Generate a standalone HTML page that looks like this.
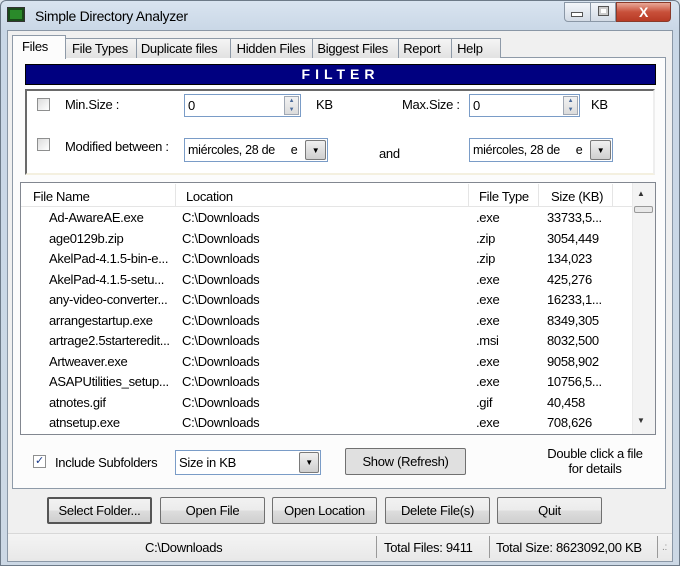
<!DOCTYPE html>
<html><head><style>
*{box-sizing:border-box;margin:0;padding:0}
body{width:680px;height:566px;overflow:hidden;background:#dfe6ee;font-family:"Liberation Sans",sans-serif;font-size:13px;color:#000;position:relative;letter-spacing:-0.3px}
.a{position:absolute}
.btn{position:absolute;border:1px solid #707070;background:linear-gradient(#f2f2f2,#ebebeb 50%,#dddddd 51%,#cfcfcf);border-radius:2px;text-align:center;font-size:13px}
.inp{position:absolute;background:#fff;border:1px solid #7a9cc7}
.cb{position:absolute;width:13px;height:13px;border:1px solid #8e8f8f;background:linear-gradient(135deg,#dcdcdc,#fff)}
.row{position:absolute;left:22px;width:590px;height:20px;line-height:20px}
.row span{position:absolute;white-space:nowrap}
.spin{position:absolute;width:15px;height:19px;border:1px solid #a0a8b4;background:linear-gradient(#f2f2f2,#dcdcdc);font-size:6px;line-height:9px;text-align:center;color:#4a6a9a}
</style></head><body>
<div class="a" style="left:0;top:0;width:680px;height:566px;border:1px solid #6d7a88;border-radius:6px 6px 0 0;background:linear-gradient(#d9e4f0,#c9d7e6 30px,#ccd8e5)"></div>
<div class="a" style="left:7px;top:7px;width:18px;height:15px;background:#1a4a1a;border:1px solid #333"><div style="margin:2px;height:9px;background:#2a8a2a"></div></div>
<div class="a" style="left:35px;top:8px;font-size:14px">Simple Directory Analyzer</div>
<div class="a" style="left:564px;top:2px;width:52px;height:20px;border:1px solid #8a97a6;border-radius:0 0 0 4px;background:linear-gradient(#f3f6fa,#d3dbe5)"></div>
<div class="a" style="left:590px;top:2px;width:1px;height:20px;background:#8a97a6"></div>
<div class="a" style="left:571px;top:12px;width:12px;height:5px;border:1px solid #555;background:#fff"></div>
<div class="a" style="left:598px;top:6px;width:11px;height:10px;border:1px solid #555;background:#fff;box-shadow:inset 0 0 0 2px #ccc"></div>
<div class="a" style="left:616px;top:2px;width:55px;height:20px;border:1px solid #8a3a2a;border-radius:0 0 4px 0;background:linear-gradient(#e8a898,#c8503a 50%,#b83a25);color:#fff;font-weight:bold;text-align:center;font-size:14px;line-height:18px">X</div>
<div class="a" style="left:7px;top:30px;width:666px;height:532px;background:#f0f0f0;border:1px solid #8a97a6"></div>
<div class="a" style="left:12px;top:57px;width:654px;height:432px;background:#fcfcfc;border:1px solid #8e9aa8"></div>
<div class="a" style="left:65px;top:38px;width:436px;height:20px;display:flex;font-size:13px">
<div style="border:1px solid #8e9aa8;border-bottom:none;background:linear-gradient(#f5f5f5,#e2e2e2);padding:2px 6px 0;width:72px">File Types</div>
<div style="border:1px solid #8e9aa8;border-bottom:none;border-left:none;background:linear-gradient(#f5f5f5,#e2e2e2);padding:2px 4px 0;width:94px">Duplicate files</div>
<div style="border:1px solid #8e9aa8;border-bottom:none;border-left:none;background:linear-gradient(#f5f5f5,#e2e2e2);padding:2px 6px 0;width:83px">Hidden Files</div>
<div style="border:1px solid #8e9aa8;border-bottom:none;border-left:none;background:linear-gradient(#f5f5f5,#e2e2e2);padding:2px 4px 0;width:86px">Biggest Files</div>
<div style="border:1px solid #8e9aa8;border-bottom:none;border-left:none;background:linear-gradient(#f5f5f5,#e2e2e2);padding:2px 4px 0;width:53px">Report</div>
<div style="border:1px solid #8e9aa8;border-bottom:none;border-left:none;background:linear-gradient(#f5f5f5,#e2e2e2);padding:2px 5px 0;width:49px">Help</div>
</div>
<div class="a" style="left:12px;top:35px;width:54px;height:24px;background:#fcfcfc;border:1px solid #8e9aa8;border-bottom:none;padding:3px 0 0 9px">Files</div>
<div class="a" style="left:25px;top:64px;width:631px;height:21px;background:#000080;border:1px solid #000;color:#fff;font-weight:bold;text-align:center;letter-spacing:5px;font-size:14px;line-height:19px">FILTER</div>
<div class="a" style="left:25px;top:89px;width:630px;height:86px;border:2px solid #6a6a6a;border-right-color:#eee;border-bottom-color:#f4f0e0;background:#fff"></div>
<div class="cb" style="left:37px;top:98px"></div>
<div class="a" style="left:65px;top:97px">Min.Size :</div>
<div class="inp" style="left:184px;top:94px;width:117px;height:23px;padding:3px 3px">0</div>
<div class="spin" style="left:284px;top:96px">▲<br>▼</div>
<div class="a" style="left:316px;top:97px">KB</div>
<div class="a" style="left:402px;top:97px">Max.Size :</div>
<div class="inp" style="left:469px;top:94px;width:111px;height:23px;padding:3px 3px">0</div>
<div class="spin" style="left:563px;top:96px">▲<br>▼</div>
<div class="a" style="left:591px;top:97px">KB</div>
<div class="cb" style="left:37px;top:138px"></div>
<div class="a" style="left:65px;top:139px">Modified between :</div>
<div class="inp" style="left:184px;top:138px;width:144px;height:24px;padding:4px 3px;font-size:12.5px">miércoles, 28 de &nbsp;&nbsp;&nbsp;&nbsp;e</div>
<div class="a" style="left:305px;top:140px;width:21px;height:20px;border:1px solid #7a7a7a;border-radius:2px;background:linear-gradient(#f0f0f0,#cfcfcf);font-size:8px;text-align:center;line-height:19px">▼</div>
<div class="a" style="left:379px;top:146px">and</div>
<div class="inp" style="left:469px;top:138px;width:144px;height:24px;padding:4px 3px;font-size:12.5px">miércoles, 28 de &nbsp;&nbsp;&nbsp;&nbsp;e</div>
<div class="a" style="left:590px;top:140px;width:21px;height:20px;border:1px solid #7a7a7a;border-radius:2px;background:linear-gradient(#f0f0f0,#cfcfcf);font-size:8px;text-align:center;line-height:19px">▼</div>
<div class="a" style="left:20px;top:182px;width:636px;height:253px;border:1px solid #828790;background:#fff"></div>
<div class="a" style="left:21px;top:183px;width:611px;height:24px;background:#fff;border-bottom:1px solid #e5e5e5"></div>
<div class="a" style="left:175px;top:184px;width:1px;height:22px;background:#e5e5e5"></div>
<div class="a" style="left:468px;top:184px;width:1px;height:22px;background:#e5e5e5"></div>
<div class="a" style="left:538px;top:184px;width:1px;height:22px;background:#e5e5e5"></div>
<div class="a" style="left:612px;top:184px;width:1px;height:22px;background:#e5e5e5"></div>
<div class="a" style="left:33px;top:189px">File Name</div>
<div class="a" style="left:186px;top:189px">Location</div>
<div class="a" style="left:479px;top:189px">File Type</div>
<div class="a" style="left:551px;top:189px">Size (KB)</div>
<div class="a" style="left:632px;top:183px;width:23px;height:251px;background:#f3f3f3;border-left:1px solid #eaeaea"></div>
<div class="a" style="left:637px;top:189px;font-size:8px;color:#333">▲</div>
<div class="a" style="left:634px;top:206px;width:19px;height:7px;border:1px solid #999;border-radius:2px;background:#e8e8e8"></div>
<div class="a" style="left:637px;top:416px;font-size:8px;color:#333">▼</div>
<div class="row" style="top:208px"><span style="left:27px">Ad-AwareAE.exe</span><span style="left:160px">C:\Downloads</span><span style="left:454px">.exe</span><span style="left:525px">33733,5...</span></div>
<div class="row" style="top:228.5px"><span style="left:27px">age0129b.zip</span><span style="left:160px">C:\Downloads</span><span style="left:454px">.zip</span><span style="left:525px">3054,449</span></div>
<div class="row" style="top:249px"><span style="left:27px">AkelPad-4.1.5-bin-e...</span><span style="left:160px">C:\Downloads</span><span style="left:454px">.zip</span><span style="left:525px">134,023</span></div>
<div class="row" style="top:269.5px"><span style="left:27px">AkelPad-4.1.5-setu...</span><span style="left:160px">C:\Downloads</span><span style="left:454px">.exe</span><span style="left:525px">425,276</span></div>
<div class="row" style="top:290px"><span style="left:27px">any-video-converter...</span><span style="left:160px">C:\Downloads</span><span style="left:454px">.exe</span><span style="left:525px">16233,1...</span></div>
<div class="row" style="top:310.5px"><span style="left:27px">arrangestartup.exe</span><span style="left:160px">C:\Downloads</span><span style="left:454px">.exe</span><span style="left:525px">8349,305</span></div>
<div class="row" style="top:331px"><span style="left:27px">artrage2.5starteredit...</span><span style="left:160px">C:\Downloads</span><span style="left:454px">.msi</span><span style="left:525px">8032,500</span></div>
<div class="row" style="top:351.5px"><span style="left:27px">Artweaver.exe</span><span style="left:160px">C:\Downloads</span><span style="left:454px">.exe</span><span style="left:525px">9058,902</span></div>
<div class="row" style="top:372px"><span style="left:27px">ASAPUtilities_setup...</span><span style="left:160px">C:\Downloads</span><span style="left:454px">.exe</span><span style="left:525px">10756,5...</span></div>
<div class="row" style="top:392.5px"><span style="left:27px">atnotes.gif</span><span style="left:160px">C:\Downloads</span><span style="left:454px">.gif</span><span style="left:525px">40,458</span></div>
<div class="row" style="top:413px;height:20px;overflow:hidden"><span style="left:27px">atnsetup.exe</span><span style="left:160px">C:\Downloads</span><span style="left:454px">.exe</span><span style="left:525px">708,626</span></div>
<div class="cb" style="left:33px;top:455px;background:#fff;color:#1a3a8a;font-size:11px;line-height:11px;text-align:center">✓</div>
<div class="a" style="left:55px;top:455px">Include Subfolders</div>
<div class="inp" style="left:175px;top:450px;width:146px;height:25px;padding:4px 3px">Size in KB</div>
<div class="a" style="left:299px;top:452px;width:20px;height:21px;border:1px solid #7a7a7a;border-radius:2px;background:linear-gradient(#f0f0f0,#cfcfcf);font-size:8px;text-align:center;line-height:20px">▼</div>
<div class="btn" style="left:345px;top:448px;width:121px;height:27px;line-height:25px;background:#e0e0e0">Show (Refresh)</div>
<div class="a" style="left:536px;top:446px;width:118px;text-align:center;line-height:15px">Double click a file<br>for details</div>
<div class="btn" style="left:47px;top:497px;width:105px;height:27px;line-height:24px;border:2px solid #555">Select Folder...</div>
<div class="btn" style="left:160px;top:497px;width:105px;height:27px;line-height:25px">Open File</div>
<div class="btn" style="left:272px;top:497px;width:105px;height:27px;line-height:25px">Open Location</div>
<div class="btn" style="left:385px;top:497px;width:105px;height:27px;line-height:25px">Delete File(s)</div>
<div class="btn" style="left:497px;top:497px;width:105px;height:27px;line-height:25px">Quit</div>
<div class="a" style="left:8px;top:533px;width:664px;height:28px;background:linear-gradient(#f4f4f4,#e8e8e8);border-top:1px solid #d8d8d8"></div>
<div class="a" style="left:145px;top:540px">C:\Downloads</div>
<div class="a" style="left:376px;top:536px;width:1px;height:22px;background:#999"></div>
<div class="a" style="left:384px;top:540px">Total Files: 9411</div>
<div class="a" style="left:489px;top:536px;width:1px;height:22px;background:#999"></div>
<div class="a" style="left:496px;top:540px">Total Size: 8623092,00 KB</div>
<div class="a" style="left:657px;top:536px;width:1px;height:22px;background:#999"></div>
<div class="a" style="left:662px;top:542px;font-size:10px;color:#888">.:</div>
</body></html>
